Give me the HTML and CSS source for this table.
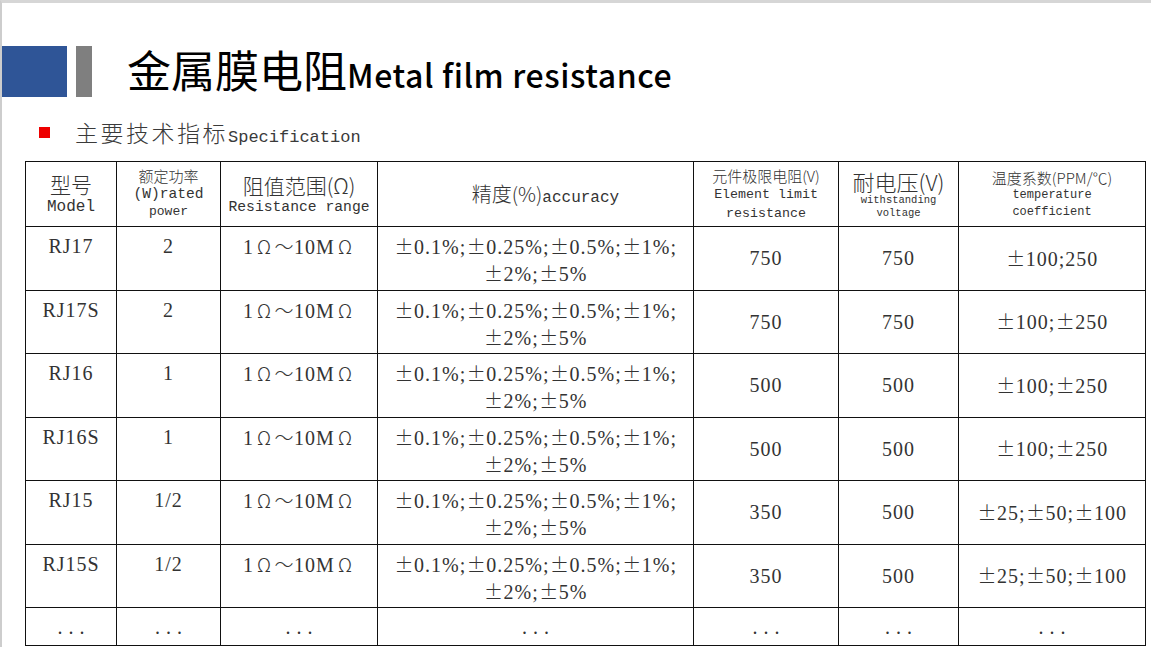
FILE: index.html
```html
<!DOCTYPE html>
<html lang="zh-CN">
<head>
<meta charset="utf-8">
<title>金属膜电阻 Metal film resistance</title>
<link rel="stylesheet" href="styles.css">
</head>
<body>
<div class="slide">
  <div class="title-row">
    <div class="bar-blue"></div>
    <div class="bar-gray"></div>
    <h1 class="title"><span class="title-cn">金属膜电阻</span><span class="title-en">Metal film resistance</span></h1>
  </div>
  <div class="sub-row">
    <div class="bullet"></div>
    <div class="sub-text"><span class="cn">主要技术指标</span><span class="mono">Specification</span></div>
  </div>
  <table class="spec">
    <colgroup>
      <col class="c1"><col class="c2"><col class="c3"><col class="c4"><col class="c5"><col class="c6"><col class="c7">
    </colgroup>
    <thead>
      <tr>
        <th><div class="h-cn22">型号</div><div class="h-en16">Model</div></th>
        <th><div class="h-cn16">额定功率</div><div class="h-en15">(W)rated</div><div class="h-en13">power</div></th>
        <th><div class="h-cn22">阻值范围(Ω)</div><div class="h-en145">Resistance range</div></th>
        <th class="acc-head"><span class="h-cn21">精度(%)</span><span class="h-en16">accuracy</span></th>
        <th><div class="h-cn15">元件极限电阻(V)</div><div class="h-en133">Element limit</div><div class="h-en133">resistance</div></th>
        <th><div class="h-cn24">耐电压(V)</div><div class="h-en105">withstanding</div><div class="h-en105">voltage</div></th>
        <th><div class="h-cn15">温度系数(PPM/℃)</div><div class="h-en12">temperature</div><div class="h-en12">coefficient</div></th>
      </tr>
    </thead>
    <tbody>
      <tr>
        <td class="top">RJ17</td><td class="top">2</td>
        <td class="top">1<span class="fw">Ω</span><span class="fw">～</span>10M<span class="fw">Ω</span></td>
        <td class="top"><span class="fw">±</span>0.1%;<span class="fw">±</span>0.25%;<span class="fw">±</span>0.5%;<span class="fw">±</span>1%;<br><span class="fw">±</span>2%;<span class="fw">±</span>5%</td>
        <td>750</td><td>750</td><td><span class="fw">±</span>100;250</td>
      </tr>
      <tr>
        <td class="top">RJ17S</td><td class="top">2</td>
        <td class="top">1<span class="fw">Ω</span><span class="fw">～</span>10M<span class="fw">Ω</span></td>
        <td class="top"><span class="fw">±</span>0.1%;<span class="fw">±</span>0.25%;<span class="fw">±</span>0.5%;<span class="fw">±</span>1%;<br><span class="fw">±</span>2%;<span class="fw">±</span>5%</td>
        <td>750</td><td>750</td><td><span class="fw">±</span>100;<span class="fw">±</span>250</td>
      </tr>
      <tr>
        <td class="top">RJ16</td><td class="top">1</td>
        <td class="top">1<span class="fw">Ω</span><span class="fw">～</span>10M<span class="fw">Ω</span></td>
        <td class="top"><span class="fw">±</span>0.1%;<span class="fw">±</span>0.25%;<span class="fw">±</span>0.5%;<span class="fw">±</span>1%;<br><span class="fw">±</span>2%;<span class="fw">±</span>5%</td>
        <td>500</td><td>500</td><td><span class="fw">±</span>100;<span class="fw">±</span>250</td>
      </tr>
      <tr>
        <td class="top">RJ16S</td><td class="top">1</td>
        <td class="top">1<span class="fw">Ω</span><span class="fw">～</span>10M<span class="fw">Ω</span></td>
        <td class="top"><span class="fw">±</span>0.1%;<span class="fw">±</span>0.25%;<span class="fw">±</span>0.5%;<span class="fw">±</span>1%;<br><span class="fw">±</span>2%;<span class="fw">±</span>5%</td>
        <td>500</td><td>500</td><td><span class="fw">±</span>100;<span class="fw">±</span>250</td>
      </tr>
      <tr>
        <td class="top">RJ15</td><td class="top">1/2</td>
        <td class="top">1<span class="fw">Ω</span><span class="fw">～</span>10M<span class="fw">Ω</span></td>
        <td class="top"><span class="fw">±</span>0.1%;<span class="fw">±</span>0.25%;<span class="fw">±</span>0.5%;<span class="fw">±</span>1%;<br><span class="fw">±</span>2%;<span class="fw">±</span>5%</td>
        <td>350</td><td>500</td><td><span class="fw">±</span>25;<span class="fw">±</span>50;<span class="fw">±</span>100</td>
      </tr>
      <tr>
        <td class="top">RJ15S</td><td class="top">1/2</td>
        <td class="top">1<span class="fw">Ω</span><span class="fw">～</span>10M<span class="fw">Ω</span></td>
        <td class="top"><span class="fw">±</span>0.1%;<span class="fw">±</span>0.25%;<span class="fw">±</span>0.5%;<span class="fw">±</span>1%;<br><span class="fw">±</span>2%;<span class="fw">±</span>5%</td>
        <td>350</td><td>500</td><td><span class="fw">±</span>25;<span class="fw">±</span>50;<span class="fw">±</span>100</td>
      </tr>
      <tr class="last">
        <td>...</td><td>...</td><td>...</td><td>...</td><td>...</td><td>...</td><td>...</td>
      </tr>
    </tbody>
  </table>
</div>
</body>
</html>
```

FILE: styles.css
```css
html, body {
  margin: 0;
  padding: 0;
  background: #ffffff;
}

.slide {
  width: 1151px;
  height: 647px;
  box-sizing: border-box;
  border-top: 3px solid #d6d6d6;
  border-left: 2px solid #cdcdcd;
  overflow: hidden;
  font-family: "Noto Sans CJK SC", sans-serif;
  color: #333333;
}

.title-row {
  display: flex;
  align-items: center;
  height: 51px;
  margin-top: 43px;
  margin-left: -2px;
}

.bar-blue {
  width: 67px;
  height: 51px;
  background: #2f5597;
  flex: none;
}

.bar-gray {
  width: 16px;
  height: 51px;
  margin-left: 9px;
  background: #7f7f7f;
  flex: none;
}

.title {
  margin: 0 0 0 35px;
  font-weight: 500;
  color: #000000;
  line-height: 51px;
  white-space: nowrap;
}

.title-cn {
  font-family: "Noto Sans CJK SC", sans-serif;
  font-size: 44px;
  font-weight: 400;
}

.title-en {
  font-family: "Noto Sans CJK SC", sans-serif;
  font-size: 32px;
  font-weight: 500;
  letter-spacing: 0.6px;
}

.sub-row {
  display: flex;
  align-items: center;
  height: 30px;
  margin-top: 20px;
  padding-left: 37px;
}

.bullet {
  width: 11px;
  height: 11px;
  background: #ee0000;
  flex: none;
}

.sub-text {
  margin-left: 25px;
  white-space: nowrap;
  color: #3a3a3a;
}

.sub-text .cn {
  font-family: "Noto Sans CJK SC", sans-serif;
  font-weight: 300;
  font-size: 23px;
  letter-spacing: 2.5px;
}

.sub-text .mono {
  font-family: "Liberation Mono", monospace;
  font-size: 17px;
}

.spec {
  margin-top: 14px;
  margin-left: 23px;
  width: 1120px;
  table-layout: fixed;
  border-collapse: collapse;
  font-family: "Liberation Serif", "Noto Sans CJK SC", serif;
  font-size: 20px;
  color: #333333;
}

.c1 { width: 91px; }
.c2 { width: 104px; }
.c3 { width: 157px; }
.c4 { width: 316px; }
.c5 { width: 145px; }
.c6 { width: 120px; }
.c7 { width: 187px; }

.spec th,
.spec td {
  box-sizing: border-box;
  border: 1px solid #111111;
  padding: 0;
  text-align: center;
  vertical-align: middle;
  font-weight: 400;
  white-space: nowrap;
}

.spec thead th {
  height: 65px;
}

.spec thead th.acc-head {
  padding-left: 20px;
}

.spec tbody td {
  height: 63.5px;
  line-height: 26px;
  letter-spacing: 1px;
}

.spec tbody td.top {
  vertical-align: top;
  padding-top: 6px;
}

.spec tbody tr.last td {
  height: 38px;
  letter-spacing: 6px;
  text-indent: 6px;
}

.fw {
  display: inline-block;
  width: 20px;
  text-align: center;
  letter-spacing: 0;
  font-family: "Noto Sans CJK SC", sans-serif;
  font-weight: 300;
  font-size: 19px;
}

.h-cn22, .h-cn24, .h-cn21, .h-cn16, .h-cn15 {
  font-family: "Noto Sans CJK SC", sans-serif;
  font-weight: 300;
}

.h-cn22 { font-size: 21px; line-height: 25px; }
.h-cn24 { font-size: 22px; line-height: 25px; }
.h-cn21 { font-size: 20px; line-height: 26px; }
.h-cn16 { font-size: 15px; line-height: 18px; }
.h-cn15 { font-size: 15px; line-height: 19px; }

.h-en16, .h-en15, .h-en13, .h-en145, .h-en133, .h-en105, .h-en12 {
  font-family: "Liberation Mono", monospace;
}

.h-en16 { font-size: 16px; line-height: 20px; }
.h-en15 { font-size: 14.6px; line-height: 18px; }
.h-en13 { font-size: 13px; line-height: 18px; }
.h-en145 { font-size: 14.7px; line-height: 18px; }
.h-en133 { font-size: 13.3px; line-height: 19px; }
.h-en105 { font-size: 10.5px; line-height: 13px; }
.h-en12 { font-size: 12px; line-height: 17px; }
```
